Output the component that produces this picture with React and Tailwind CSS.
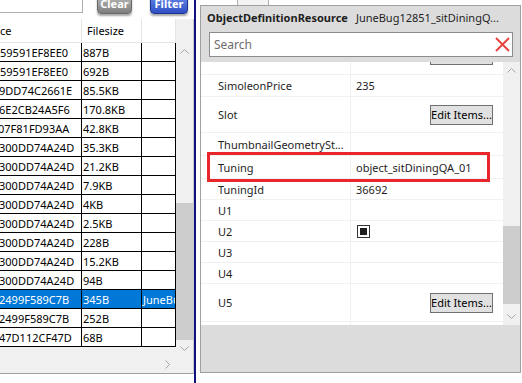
import React from "react";

const leftRows = [
  ["59591EF8EE0", 0, "887B", ""],
  ["59591EF8EE0", 0, "692B", ""],
  ["9DD74C2661E", -1, "85.5KB", ""],
  ["6E2CB24A5F6", -1, "170.8KB", ""],
  ["07F81FD93AA", -2, "42.8KB", ""],
  ["300DD74A24D", -1, "35.3KB", ""],
  ["300DD74A24D", -1, "21.2KB", ""],
  ["300DD74A24D", -1, "7.9KB", ""],
  ["300DD74A24D", -1, "4KB", ""],
  ["300DD74A24D", -1, "2.5KB", ""],
  ["300DD74A24D", -1, "228B", ""],
  ["300DD74A24D", -1, "15.2KB", ""],
  ["300DD74A24D", -1, "94B", ""],
  ["2499F589C7B", -1, "345B", "JuneBug12851"],
  ["2499F589C7B", -1, "252B", ""],
  ["47D112CF47D", -1, "68B", ""],
];

function Chevron({ dir }) {
  if (dir === "up")
    return (
      <svg width="9" height="5" viewBox="0 0 9 5">
        <polyline points="0.5,4.5 4.5,0.5 8.5,4.5" fill="none" stroke="#a6a6a6" strokeWidth="1" />
      </svg>
    );
  if (dir === "down")
    return (
      <svg width="9" height="5" viewBox="0 0 9 5">
        <polyline points="0.5,0.5 4.5,4.5 8.5,0.5" fill="none" stroke="#a6a6a6" strokeWidth="1" />
      </svg>
    );
  return (
    <svg width="5" height="9" viewBox="0 0 5 9">
      <polyline points="0.5,0.5 4.5,4.5 0.5,8.5" fill="none" stroke="#a6a6a6" strokeWidth="1" />
    </svg>
  );
}

function EditButton() {
  return (
    <div className="w-[63px] h-[20px] border border-[#707070] bg-[#e1e1e1] flex items-center justify-center text-black whitespace-nowrap">
      Edit Items...
    </div>
  );
}

function PropRow({ h, label, value, children }) {
  return (
    <div className="flex border-b border-[#f0f0f0] overflow-hidden shrink-0" style={{ height: h }}>
      <div className="w-[150px] shrink-0 border-r border-[#f0f0f0] pl-[17px] flex items-center whitespace-nowrap text-[#1e1e1e]">
        {label}
      </div>
      <div className="flex-1 flex items-center pl-[5px] whitespace-nowrap text-[#1e1e1e]">
        {value}
        {children}
      </div>
    </div>
  );
}

export default function App() {
  return (
    <div className="relative w-[522px] h-[383px] bg-white overflow-hidden flex font-['Noto_Sans',sans-serif] text-[11px] leading-none text-black">
      {/* LEFT PANE */}
      <div className="w-[194px] shrink-0 flex flex-col">
        {/* top toolbar */}
        <div className="h-[19px] flex items-start bg-white shrink-0">
          <div className="w-[83px] h-[13px] border-r border-b border-[#abadb3] bg-white shrink-0" />
          <div className="ml-[14px] w-[35px] h-[22px] -mt-[8px] rounded-[4px] bg-gradient-to-b from-[#c4c4c4] to-[#7e7e7e] border border-[#6a6a6a] shadow-[0_2px_2px_rgba(0,0,0,0.35)] flex items-center justify-center text-white font-bold text-[11px] shrink-0">
            Clear
          </div>
          <div className="ml-[18px] w-[38px] h-[22px] -mt-[8px] rounded-[4px] bg-gradient-to-b from-[#6f8ff0] to-[#2f4fc4] border border-[#1f3490] shadow-[0_2px_2px_rgba(0,0,0,0.35)] flex items-center justify-center text-white font-bold text-[11px] shrink-0">
            Filter
          </div>
        </div>
        {/* grid */}
        <div className="flex-1 flex flex-col bg-[#f0f0f0] border-r border-[#c8c8c8] border-b border-b-[#a0a0a0] min-h-0">
          <div className="flex flex-1 min-h-0">
            <div className="w-[176px] shrink-0 flex flex-col">
              <div className="h-[24px] flex bg-white border-b border-[#e5e5e5] shrink-0">
                <div className="w-[82px] border-r border-[#e5e5e5] flex items-center overflow-hidden whitespace-nowrap">ce</div>
                <div className="w-[60px] border-r border-[#e5e5e5] flex items-center pl-[5px]">Filesize</div>
                <div className="w-[34px] border-r border-[#e5e5e5]" />
              </div>
              {leftRows.map((r, i) => {
                const sel = i === 13;
                return (
                  <div
                    key={i}
                    className={`h-[19px] flex border-b border-black shrink-0 ${sel ? "bg-[#0078d7] text-white" : "bg-white"}`}
                  >
                    <div className="w-[82px] border-r border-black flex items-center overflow-hidden whitespace-nowrap">
                      <span style={{ marginLeft: r[1] }}>{r[0]}</span>
                    </div>
                    <div className="w-[60px] border-r border-black flex items-center pl-[1px] whitespace-nowrap">{r[2]}</div>
                    <div className="w-[34px] border-r border-black flex items-center pl-[1px] overflow-hidden whitespace-nowrap">{r[3]}</div>
                  </div>
                );
              })}
            </div>
            {/* vertical scrollbar */}
            <div className="w-[17px] shrink-0 flex flex-col">
              <div className="h-[24px] shrink-0" />
              <div className="h-[17px] flex items-center justify-center shrink-0">
                <Chevron dir="up" />
              </div>
              <div className="h-[143px] shrink-0" />
              <div className="h-[137px] bg-[#cdcdcd] shrink-0" />
              <div className="h-[17px] flex items-center justify-center shrink-0">
                <Chevron dir="down" />
              </div>
            </div>
          </div>
          {/* horizontal scrollbar */}
          <div className="h-[17px] flex shrink-0">
            <div className="w-[159px]" />
            <div className="w-[17px] flex items-center justify-center">
              <Chevron dir="right" />
            </div>
          </div>
        </div>
        <div className="h-[9px] shrink-0 bg-white" />
      </div>

      {/* splitter */}
      <div className="w-[2px] shrink-0 bg-[#12127e]" />
      <div className="w-[4px] shrink-0 bg-white" />

      {/* RIGHT PANE */}
      <div className="w-[321px] shrink-0 flex flex-col">
        <div className="h-[5px] shrink-0 flex">
          <div className="ml-[37px] w-[32px] border-l border-r border-[#adadad] bg-[#f4f4f4]" />
        </div>
        <div className="h-[368px] shrink-0 border border-[#a0a0a0] bg-[#dcdcdc] flex flex-col">
          <div className="h-[23px] shrink-0 flex items-center pl-[6px] whitespace-nowrap text-[#1e1e1e]">
            <span className="font-bold">ObjectDefinitionResource</span>
            <span className="ml-[8px]">JuneBug12851_sitDiningQ...</span>
          </div>
          <div className="h-[3px] shrink-0" />
          <div className="ml-[8px] w-[304px] h-[25px] shrink-0 border border-[#8c8c8c] bg-white flex items-center justify-between pl-[4px] pr-[2px]">
            <span className="text-[#6d6d6d] text-[12px]">Search</span>
            <svg width="15" height="15" viewBox="0 0 15 15">
              <line x1="1" y1="1" x2="14" y2="14" stroke="#e5443e" strokeWidth="2" />
              <line x1="14" y1="1" x2="1" y2="14" stroke="#e5443e" strokeWidth="2" />
            </svg>
          </div>
          <div className="h-[5px] shrink-0" />
          <div className="h-[263px] shrink-0 flex">
            <div className="w-[302px] shrink-0 bg-white flex flex-col">
              <div className="h-[13px] flex border-b border-[#f0f0f0] overflow-hidden shrink-0">
                <div className="w-[150px] shrink-0 border-r border-[#f0f0f0] pl-[17px] flex items-end">
                  <div className="w-[4px] h-[1px] bg-[#444] mb-[-1px]" />
                </div>
                <div className="flex-1 flex justify-end pr-[10px] items-start">
                  <div className="-mt-[17px]">
                    <EditButton />
                  </div>
                </div>
              </div>
              <PropRow h={22} label="SimoleonPrice" value="235" />
              <PropRow h={36} label="Slot">
                <div className="flex-1 flex justify-end pr-[10px]">
                  <EditButton />
                </div>
              </PropRow>
              <PropRow h={23} label="ThumbnailGeometrySt..." value="" />
              <PropRow h={23} label="Tuning" value="object_sitDiningQA_01" />
              <PropRow h={21} label="TuningId" value="36692" />
              <PropRow h={21} label="U1" value="" />
              <PropRow h={21} label="U2">
                <div className="ml-[1px] w-[13px] h-[13px] border border-[#333] bg-white flex items-center justify-center">
                  <div className="w-[7px] h-[7px] bg-[#1e1e1e]" />
                </div>
              </PropRow>
              <PropRow h={21} label="U3" value="" />
              <PropRow h={21} label="U4" value="" />
              <PropRow h={38} label="U5">
                <div className="flex-1 flex justify-end pr-[10px]">
                  <EditButton />
                </div>
              </PropRow>
              <div className="h-[3px] flex shrink-0">
                <div className="w-[150px] border-r border-[#f0f0f0]" />
              </div>
            </div>
            <div className="w-[17px] shrink-0 bg-[#f0f0f0] flex flex-col">
              <div className="h-[17px] flex items-center justify-center shrink-0">
                <Chevron dir="up" />
              </div>
              <div className="h-[147px] shrink-0" />
              <div className="h-[78px] bg-[#cdcdcd] shrink-0" />
              <div className="h-[4px] shrink-0" />
              <div className="h-[17px] flex items-center justify-center shrink-0">
                <Chevron dir="down" />
              </div>
            </div>
          </div>
          <div className="flex-1" />
        </div>
      </div>

      {/* red highlight annotation */}
      <div className="absolute left-[207px] top-[152px] w-[283px] h-[30px] border-[3px] border-[#e8262b] pointer-events-none" />
    </div>
  );
}
